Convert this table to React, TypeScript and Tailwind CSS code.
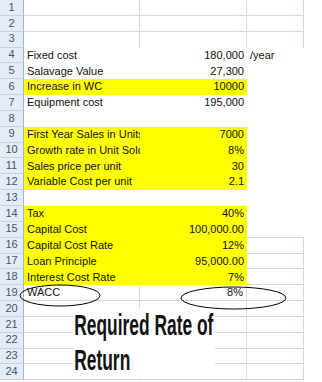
import React from 'react';

type Row = {
  n: number;
  a?: string;
  b?: string;
  c?: string;
  yellow?: boolean;
  grid?: 'full' | 'side';
  cLine?: 'bottom' | 'full';
};

const rows: Row[] = [
  { n: 1, grid: 'full' },
  { n: 2, grid: 'full' },
  { n: 3, grid: 'side' },
  { n: 4, a: 'Fixed cost', b: '180,000', c: '/year' },
  { n: 5, a: 'Salavage Value', b: '27,300' },
  { n: 6, a: 'Increase in WC', b: '10000', yellow: true },
  { n: 7, a: 'Equipment cost', b: '195,000' },
  { n: 8 },
  { n: 9, a: 'First Year Sales in Units', b: '7000', yellow: true },
  { n: 10, a: 'Growth rate in Unit Sold', b: '8%', yellow: true },
  { n: 11, a: 'Sales price per unit', b: '30', yellow: true },
  { n: 12, a: 'Variable Cost per unit', b: '2.1', yellow: true },
  { n: 13 },
  { n: 14, a: 'Tax', b: '40%', yellow: true },
  { n: 15, a: 'Capital Cost', b: '100,000.00', yellow: true, cLine: 'bottom' },
  { n: 16, a: 'Capital Cost Rate', b: '12%', yellow: true, cLine: 'full' },
  { n: 17, a: 'Loan Principle', b: '95,000.00', yellow: true, cLine: 'full' },
  { n: 18, a: 'Interest Cost Rate', b: '7%', yellow: true, cLine: 'full' },
  { n: 19, a: 'WACC', b: '8%', grid: 'full' },
  { n: 20, grid: 'full' },
  { n: 21, grid: 'full' },
  { n: 22, grid: 'full' },
  { n: 23, grid: 'full' },
  { n: 24, grid: 'full' },
];

// white sheet cell, with or without gridlines
const cellClass = (row: Row) => {
  if (row.yellow) return 'bg-[#ffff00]';
  if (row.grid === 'full') return 'border-b border-r border-[#d0d7e5]';
  if (row.grid === 'side') return 'border-r border-[#d0d7e5]';
  return '';
};

const colCClass = (row: Row) => {
  if (row.grid === 'full' || row.cLine === 'full') return 'border-b border-r border-[#d0d7e5]';
  if (row.grid === 'side') return 'border-r border-[#d0d7e5]';
  if (row.cLine === 'bottom') return 'border-b border-[#d0d7e5]';
  return '';
};

const SheetRow = ({ row }: { row: Row }) => (
  <div className="flex h-[15.85px]">
    <div className="w-[24px] shrink-0 flex items-center justify-center bg-[#e4ecf7] border-b border-r border-b-[#c5d3e4] border-r-[#9eb6ce] text-[#44546a] text-[11px] pb-[1px]">
      {row.n}
    </div>
    <div className={`w-[116px] shrink-0 flex items-center overflow-hidden whitespace-nowrap pl-[3px] pb-[1px] ${cellClass(row)}`}>
      {row.a}
    </div>
    <div className={`w-[107px] shrink-0 flex items-center justify-end overflow-hidden whitespace-nowrap pr-[3px] pb-[1px] ${cellClass(row)}`}>
      {row.b}
    </div>
    <div className={`w-[57px] shrink-0 flex items-center whitespace-nowrap pl-[3px] pb-[1px] ${colCClass(row)}`}>
      {row.c}
    </div>
    <div className="flex-1" />
  </div>
);

export default function App() {
  return (
    <div className="relative w-[322px] h-[382px] overflow-hidden bg-white text-[#111] text-[11px] font-['Liberation_Sans',Arial,sans-serif]">
      <div className="flex flex-col">
        {rows.map((row) => (
          <SheetRow key={row.n} row={row} />
        ))}
      </div>

      {/* text box pasted over the grid */}
      <div className="absolute left-[73px] top-[308px] w-[142px] h-[70px] bg-white overflow-hidden">
        <div className="pl-[2px] origin-top-left scale-x-[0.6] whitespace-nowrap font-bold text-[29px] leading-[35px] text-[#111]">
          <div>Required Rate of</div>
          <div>Return</div>
        </div>
      </div>

      {/* hand-drawn circles */}
      <svg className="absolute left-0 top-0 pointer-events-none" width="322" height="382" viewBox="0 0 322 382">
        <ellipse cx="60" cy="295.5" rx="40" ry="10.5" fill="none" stroke="#000" strokeWidth="1" />
        <ellipse cx="233.5" cy="298" rx="52.5" ry="11" fill="none" stroke="#000" strokeWidth="1" />
      </svg>
    </div>
  );
}
